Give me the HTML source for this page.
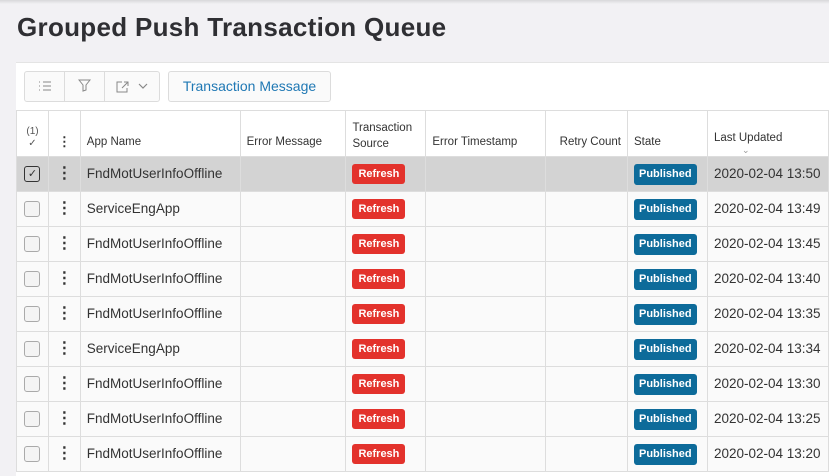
<!DOCTYPE html>
<html><head><style>
body{margin:0;width:829px;height:475px;overflow:hidden;background:#f2f1f4;font-family:"Liberation Sans",sans-serif;position:relative}
.sh{position:absolute;left:0;top:0;width:829px;height:4px;background:linear-gradient(#d8d8da,#f2f1f4)}
h1{position:absolute;left:17px;top:12px;margin:0;font-size:26px;font-weight:bold;color:#2f2f33;letter-spacing:0.3px}
.panel{position:absolute;left:16px;top:62px;width:813px;height:413px;background:#fff;border-top:1px solid #e4e4e4}
.tb{position:absolute;top:8px;height:29px;border:1px solid #dcdcdc;border-radius:3px;background:#fafafa}
.tb .s{position:absolute;top:0;bottom:0;width:1px;background:#dcdcdc}
.btn{left:152px;width:161px;color:#1f78b4;font-size:14px;text-align:center;line-height:29px}
table{position:absolute;left:0;top:47px;border-collapse:collapse;table-layout:fixed;font-size:13px;color:#333}
td,th{border:1px solid #ddd;padding:0 6px;white-space:nowrap;overflow:hidden;vertical-align:middle}
th{height:45px;padding-top:0;padding-bottom:0;font-weight:normal;text-align:left;font-size:11.5px;color:#333;line-height:16px}
td{height:34px;font-size:13.5px;line-height:16px}
tr.r{background:#fafafa}
tr.sel{background:#d3d3d3}
.cb{width:14px;height:14px;border:1px solid #aaa;border-radius:3px;background:#f4f4f4;margin:auto}
.sel .cb{border-color:#333;background:#d3d3d3}
.dots{text-align:center;font-weight:bold;font-size:16px;padding:0}
.red{display:inline-block;vertical-align:middle;background:#e3322c;color:#fff;font-weight:bold;font-size:11px;padding:0 6px;height:20px;line-height:20px;border-radius:3px}
.blu{display:inline-block;vertical-align:middle;background:#0d6b9a;color:#fff;font-weight:bold;font-size:11px;padding:0 5px;height:21px;line-height:21px;border-radius:3px}
.up{position:relative;top:8px}
</style></head><body>
<div class="sh"></div>
<h1>Grouped Push Transaction Queue</h1>
<div class="panel">
<div class="tb" style="left:8px;width:134px">
<div class="s" style="left:39px"></div><div class="s" style="left:79px"></div>
<svg style="position:absolute;left:13px;top:8px" width="14" height="12" stroke="#888" stroke-width="1" fill="none"><path d="M1 2h1M1 6h1M1 10h1M5 2h8M5 6h8M5 10h8"/></svg>
<svg style="position:absolute;left:53px;top:7px" width="13" height="13" stroke="#888" stroke-width="1" fill="none"><path d="M1 1h11L8 6v5l-3 1V6z"/></svg>
<svg style="position:absolute;left:91px;top:8px" width="14" height="13" stroke="#888" stroke-width="1" fill="none"><path d="M6 2H1v10h10V8M6 8l6-6M8 2h4v4"/></svg>
<svg style="position:absolute;left:113px;top:11px" width="10" height="6" stroke="#888" stroke-width="1.2" fill="none"><path d="M1 1l4 4 4-4"/></svg>
</div>
<div class="tb btn">Transaction Message</div>
<table>
<colgroup><col style="width:32px"><col style="width:32px"><col style="width:160px"><col style="width:106px"><col style="width:80px"><col style="width:120px"><col style="width:82px"><col style="width:80px"><col style="width:121px"></colgroup>
<tr style="background:#fff"><th style="text-align:center;font-size:10px;color:#555;padding:0;line-height:12px"><span class="up" style="top:4px">(1)<br>✓</span></th><th class="dots" style="font-size:13px"><span class="up">⋮</span></th><th><span class="up">App Name</span></th><th><span class="up">Error Message</span></th><th><span class="up" style="top:2px">Transaction<br>Source</span></th><th><span class="up">Error Timestamp</span></th><th style="text-align:right"><span class="up">Retry Count</span></th><th><span class="up">State</span></th><th><span class="up">Last Updated</span><div class="up" style="font-size:9px;color:#999;padding-left:28px;line-height:8px;margin-top:0">⌄</div></th></tr>
<tr class="sel"><td><div class="cb" style="text-align:center;font-size:11px;line-height:14px">✓</div></td><td class="dots">⋮</td><td>FndMotUserInfoOffline</td><td></td><td><span class="red">Refresh</span></td><td></td><td></td><td><span class="blu">Published</span></td><td>2020-02-04 13:50</td></tr>
<tr class="r"><td><div class="cb"></div></td><td class="dots">⋮</td><td>ServiceEngApp</td><td></td><td><span class="red">Refresh</span></td><td></td><td></td><td><span class="blu">Published</span></td><td>2020-02-04 13:49</td></tr>
<tr class="r"><td><div class="cb"></div></td><td class="dots">⋮</td><td>FndMotUserInfoOffline</td><td></td><td><span class="red">Refresh</span></td><td></td><td></td><td><span class="blu">Published</span></td><td>2020-02-04 13:45</td></tr>
<tr class="r"><td><div class="cb"></div></td><td class="dots">⋮</td><td>FndMotUserInfoOffline</td><td></td><td><span class="red">Refresh</span></td><td></td><td></td><td><span class="blu">Published</span></td><td>2020-02-04 13:40</td></tr>
<tr class="r"><td><div class="cb"></div></td><td class="dots">⋮</td><td>FndMotUserInfoOffline</td><td></td><td><span class="red">Refresh</span></td><td></td><td></td><td><span class="blu">Published</span></td><td>2020-02-04 13:35</td></tr>
<tr class="r"><td><div class="cb"></div></td><td class="dots">⋮</td><td>ServiceEngApp</td><td></td><td><span class="red">Refresh</span></td><td></td><td></td><td><span class="blu">Published</span></td><td>2020-02-04 13:34</td></tr>
<tr class="r"><td><div class="cb"></div></td><td class="dots">⋮</td><td>FndMotUserInfoOffline</td><td></td><td><span class="red">Refresh</span></td><td></td><td></td><td><span class="blu">Published</span></td><td>2020-02-04 13:30</td></tr>
<tr class="r"><td><div class="cb"></div></td><td class="dots">⋮</td><td>FndMotUserInfoOffline</td><td></td><td><span class="red">Refresh</span></td><td></td><td></td><td><span class="blu">Published</span></td><td>2020-02-04 13:25</td></tr>
<tr class="r"><td><div class="cb"></div></td><td class="dots">⋮</td><td>FndMotUserInfoOffline</td><td></td><td><span class="red">Refresh</span></td><td></td><td></td><td><span class="blu">Published</span></td><td>2020-02-04 13:20</td></tr>
</table>
</div>
</body></html>
